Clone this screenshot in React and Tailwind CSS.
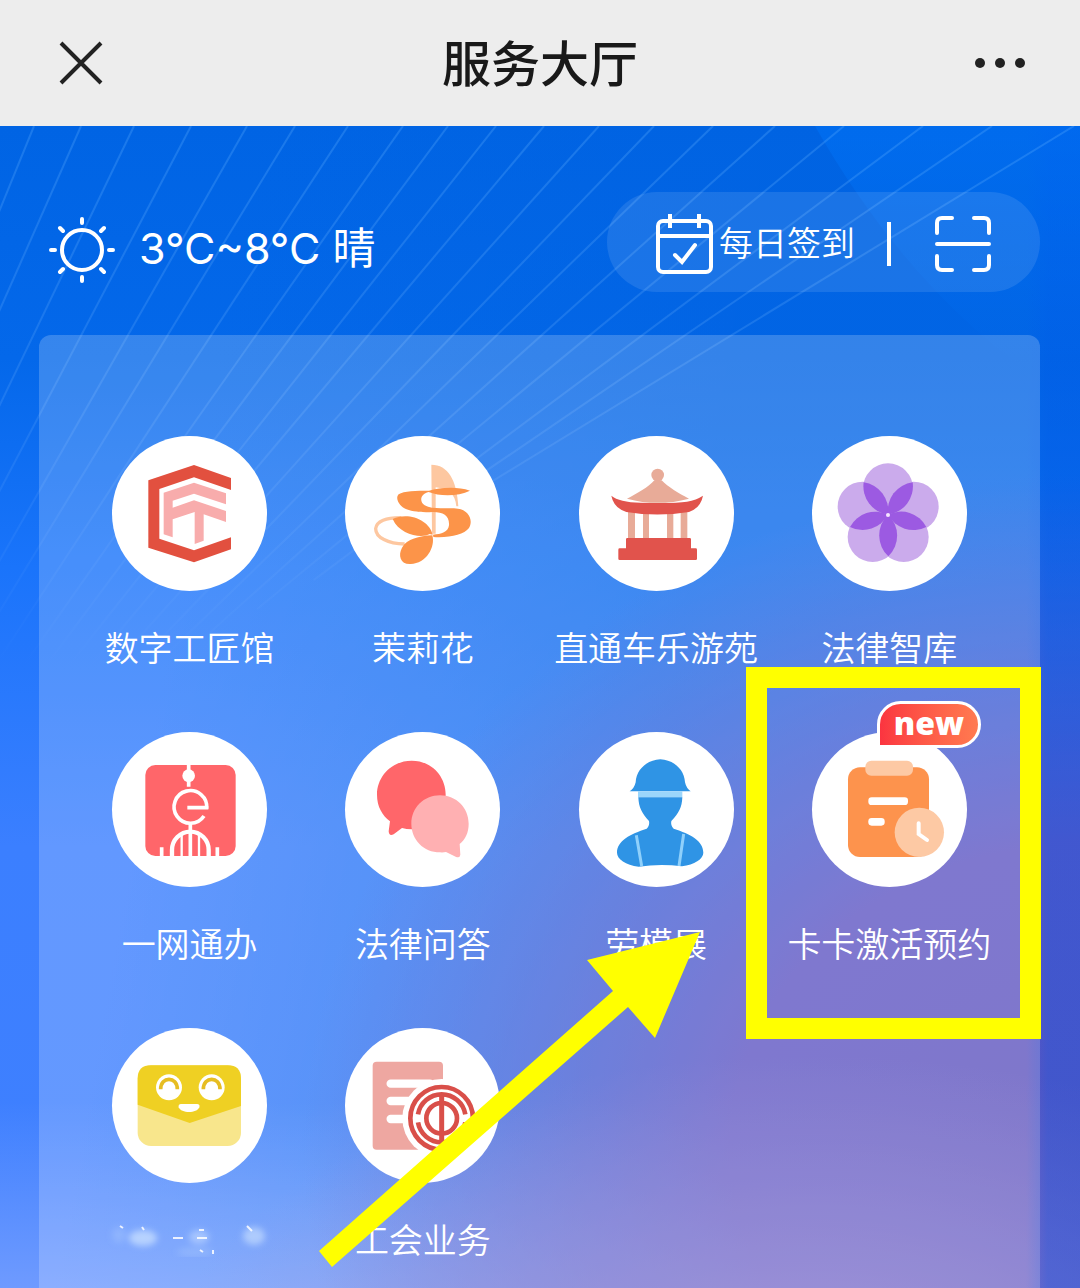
const RAYS = [
  34, 81, 134, 191, 247, 295, 348, 403, 448, 496, 544, 599, 654, 713, 775, 844,
  923, 992, 1074,
];

const Rays = () => (
  <svg
    aria-hidden="true"
    className="absolute inset-x-0 top-0 w-full"
    viewBox="0 0 1080 560"
    fill="none"
  >
    <defs>
      <linearGradient id="ray" gradientUnits="userSpaceOnUse" x1="0" y1="0" x2="0" y2="540">
        <stop offset="0" stopColor="#5fb0ff" stopOpacity=".28" />
        <stop offset=".5" stopColor="#7fbcff" stopOpacity=".18" />
        <stop offset="1" stopColor="#9cc8ff" stopOpacity="0" />
      </linearGradient>
      <linearGradient id="facet" gradientUnits="userSpaceOnUse" x1="0" y1="0" x2="0" y2="240">
        <stop offset="0" stopColor="#0078ff" stopOpacity=".4" />
        <stop offset="1" stopColor="#0078ff" stopOpacity="0" />
      </linearGradient>
    </defs>
    <path d="M815 0H1080V240H1020Q900 150 815 0Z" fill="url(#facet)" />
    {RAYS.map((x) => {
      const angle = ((69 - x * 0.035) * Math.PI) / 180;
      return (
        <line
          key={x}
          x1={x}
          y1="0"
          x2={x - 760 * Math.cos(angle)}
          y2={760 * Math.sin(angle)}
          stroke="url(#ray)"
          strokeWidth="2"
        />
      );
    })}
  </svg>
);

const SunIcon = () => (
  <svg className="size-[66px]" viewBox="0 0 66 66" fill="none" stroke="white" strokeWidth="4" strokeLinecap="round" aria-hidden="true">
    <circle cx="33" cy="33" r="20" />
    <path d="M33 2v4M33 60v4M2 33h4M60 33h4M11 11l3 3M52 52l3 3M11 55l3-3M52 14l3-3" />
  </svg>
);

const CalendarIcon = () => (
  <svg className="h-[62px] w-[58px]" viewBox="0 0 58 62" fill="none" stroke="white" strokeWidth="4" aria-hidden="true">
    <rect x="3" y="8" width="53" height="51" rx="5" />
    <path d="M3 23h53M15 1v14M44 1v14" />
    <path d="M20 42l7 7 13-17" strokeWidth="4" strokeLinecap="round" />
  </svg>
);

const ScanIcon = () => (
  <svg className="size-[58px]" viewBox="0 0 58 58" fill="none" stroke="white" strokeWidth="4" strokeLinecap="round" aria-hidden="true">
    <path d="M3 18V8q0-5 5-5h10M40 3h10q5 0 5 5v10M3 41v9q0 5 5 5h10M40 55h10q5 0 5-5V41M3 29h52" />
  </svg>
);

const CraftIcon = () => (
  <svg viewBox="36 32 465 465">
    <path fill="#e2503f" d="M145 165L282 119L393 158V194L282 156L178 191V340L282 375L393 336V372L282 411L145 367Z" />
    <path fill="#f8acac" d="M191 202L282 172L378 204V237L282 205L218 226V247L282 225L378 257V290L311 267V346L284 356V260L218 282V336L191 327Z" />
  </svg>
);

const JasmineIcon = () => (
  <svg viewBox="36 32 465 465">
    <path fill="#fdc7a0" d="M295 118C345 118 372 165 376 243H370C367 205 345 190 308 186V325H297Z" />
    <path fill="#fc9449" d="M411 196C370 182 318 188 288 196C250 196 212 196 197 207C187 217 195 236 214 249C235 259 262 262 300 260C332 260 350 272 348 300C346 320 325 327 300 328L301 335C350 338 393 328 408 308C422 283 406 254 375 250C345 245 300 255 275 240C258 228 262 206 287 200C318 213 375 214 411 196Z" />
    <path d="M205 277C160 276 130 288 128 310C128 336 165 356 215 356" fill="none" stroke="#fdc7a0" strokeWidth="10" />
    <path fill="#fc9449" d="M179 281C225 258 290 284 299 328L290 326C268 340 200 330 179 281Z" />
    <path fill="#fc9449" d="M298 330C308 365 280 415 233 416C203 418 194 391 207 367C222 341 258 332 298 330Z" />
  </svg>
);

const PavilionIcon = () => (
  <svg viewBox="36 32 465 465">
    <g fill="#e8ab98">
      <circle cx="272" cy="149" r="19" />
      <path d="M262 165H284C303 185 335 204 366 220Q272 245 180 220C210 205 245 185 262 165Z" />
      <path d="M183 258h21v84h-21zM228 262h18v80h-18zM300 262h19v80h-19zM341 258h20v84h-20z" />
    </g>
    <path fill="#e1534c" d="M133 211Q157 231 220 232Q320 235 360 229Q388 224 408 211Q401 248 366 260Q270 275 178 260Q140 248 133 211Z" />
    <path fill="#e1534c" d="M177 342q0-4 4-4H368q4 0 4 4V369H386q4 0 4 4V400q0 4-4 4H158q-4 0-4-4V373q0-4 4-4H177Z" />
  </svg>
);

const PetalsIcon = () => (
  <svg viewBox="36 32 465 465">
    <g fill="#cbabec">
      <circle cx="264" cy="189" r="75" />
      <circle cx="341" cy="244" r="75" />
      <circle cx="311" cy="335" r="75" />
      <circle cx="218" cy="335" r="75" />
      <circle cx="188" cy="244" r="75" />
    </g>
    <g fill="#9c5ae2">
      <path d="M264 268A86 86 0 0 1 191 171A86 86 0 0 1 264 268Z" />
      <path d="M264 268A86 86 0 0 1 338 171A86 86 0 0 1 264 268Z" />
      <path d="M264 268A86 86 0 0 1 150 305A86 86 0 0 1 264 268Z" />
      <path d="M264 268A86 86 0 0 1 379 305A86 86 0 0 1 264 268Z" />
      <path d="M264 268A86 86 0 0 1 265 393A86 86 0 0 1 264 268Z" />
    </g>
    <circle cx="264" cy="269" r="6" fill="#f6e6ff" />
  </svg>
);

const OneStopIcon = () => (
  <svg viewBox="36 36 465 465">
    <rect x="136" y="135" width="271" height="273" rx="30" fill="#ff666a" />
    <circle cx="266" cy="167" r="19" fill="white" />
    <g fill="none" stroke="white" strokeWidth="11">
      <path d="M266 134V200M262 263H325" />
      <path d="M320 266A49 49 0 1 0 312 288" />
      <path d="M216 410V390A55 55 0 0 1 326 390V410" strokeWidth="13" />
      <path d="M271 312V410M185 382V410M352 382V410" />
      <path d="M245 342V410M297 342V410" strokeWidth="7" />
    </g>
  </svg>
);

const ChatIcon = () => (
  <svg viewBox="36 36 465 465">
    <path fill="#ff666a" d="M236 122C295 122 338 168 338 224C338 285 295 328 236 328Q220 328 207 324L182 343Q168 350 167 334L171 304C148 286 132 260 132 224C132 168 178 122 236 122Z" />
    <path fill="#ffb0b2" d="M321 226C370 226 407 264 407 311C407 338 397 358 380 372L382 404Q380 416 368 410L339 396Q330 398 321 397C272 397 235 359 235 311C235 264 272 226 321 226Z" />
  </svg>
);

const WorkerIcon = () => (
  <svg viewBox="36 36 465 465">
    <path fill="#2f94e5" d="M188 214Q202 205 206 187C208 148 240 120 280 118C320 120 352 148 354 187Q358 205 371 214Z" />
    <path fill="#9cd6fb" d="M213 214H346V232H213Z" />
    <path fill="#2f94e5" d="M214 232H346C345 262 335 281 313 303Q310 316 320 326C370 342 409 362 409 398C409 417 382 434 345 439Q280 430 215 440C176 435 150 417 150 398C150 362 190 342 239 326Q249 316 246 303C225 281 215 262 214 232Z" />
    <path stroke="#8fd0fb" strokeWidth="9" d="M208 346L224 438M350 342L336 438" />
  </svg>
);

const BookingIcon = () => (
  <svg viewBox="217 216 465 465">
    <rect x="325" y="322" width="243" height="269" rx="36" fill="#fd934d" />
    <rect x="377" y="302" width="143" height="45" rx="18" fill="#fdc9a4" />
    <rect x="386" y="412" width="119" height="23" rx="10" fill="white" />
    <rect x="386" y="474" width="49" height="23" rx="10" fill="white" />
    <circle cx="539" cy="517" r="74" fill="#fdc9a4" />
    <path d="M537 490V522L562 540" fill="none" stroke="white" strokeWidth="12" strokeLinecap="round" />
  </svg>
);

const MailIcon = () => (
  <svg viewBox="67 54 465 465">
    <rect x="144" y="166" width="310" height="242" rx="40" fill="#f8e68c" />
    <path fill="#efd023" d="M144 284V206Q144 166 184 166H414Q454 166 454 206V288L300 339Z" />
    <circle cx="238" cy="232" r="39" fill="white" />
    <circle cx="366" cy="232" r="39" fill="white" />
    <g fill="none" stroke="#e6bd22" strokeWidth="11">
      <path d="M213 238C213 198 263 198 263 238M341 238C341 198 391 198 391 238" />
    </g>
    <path fill="white" d="M274 282H322Q332 283 329 292C322 311 274 311 267 292Q265 283 274 282Z" />
  </svg>
);

const UnionIcon = () => (
  <svg viewBox="107 323 465 465">
    <rect x="190" y="424" width="211" height="264" rx="12" fill="#eea7a1" />
    <path stroke="white" strokeWidth="25" strokeLinecap="round" d="M244 490H362M244 542H310M244 596H290" />
    <circle cx="397" cy="594" r="118" fill="white" />
    <g fill="none" stroke="#d94f49" strokeWidth="14">
      <circle cx="397" cy="594" r="94" />
      <path d="M326 582A72 72 0 0 1 468 582M326 606A72 72 0 0 0 468 606" />
      <circle cx="397" cy="594" r="46" />
      <path d="M397 524V664" strokeWidth="15" />
    </g>
  </svg>
);

// label is worn away on this entry, only a few strokes stay visible
const WornLabel = () => (
  <svg className="h-9 w-[170px]" viewBox="0 0 170 36" aria-hidden="true">
    <defs>
      <filter id="soft" x="-40%" y="-40%" width="180%" height="180%">
        <feGaussianBlur stdDeviation="3" />
      </filter>
    </defs>
    <g fill="#cfe4ff" filter="url(#soft)">
      <ellipse cx="38" cy="17" rx="14" ry="8" opacity=".7" />
      <ellipse cx="94" cy="16" rx="10" ry="7" opacity=".5" />
      <ellipse cx="149" cy="15" rx="11" ry="9" opacity=".6" />
      <ellipse cx="14" cy="14" rx="7" ry="8" opacity=".2" />
      <ellipse cx="90" cy="31" rx="18" ry="5" opacity=".2" />
    </g>
    <path d="M68 17h10M92 17h10M142 5l5 5M15 5l3 2M37 6l2 3M94 9h5M95 29l3 2M108 29v4" stroke="white" strokeWidth="2" opacity=".85" />
  </svg>
);

const Arrow = () => (
  <svg
    className="pointer-events-none absolute -top-[97px] left-[13px] z-10 h-[337px] w-[384px]"
    viewBox="0 0 384 337"
    aria-hidden="true"
  >
    <path fill="#ffff00" d="M0 320L294 60L268 29L381 1L336 107L309 76L13 336Z" />
  </svg>
);

const SERVICES = [
  { label: "数字工匠馆", icon: CraftIcon },
  { label: "茉莉花", icon: JasmineIcon },
  { label: "直通车乐游苑", icon: PavilionIcon },
  { label: "法律智库", icon: PetalsIcon },
  { label: "一网通办", icon: OneStopIcon },
  { label: "法律问答", icon: ChatIcon },
  { label: "劳模展", icon: WorkerIcon },
  { label: "卡卡激活预约", icon: BookingIcon, isNew: true, framed: true },
  { icon: MailIcon },
  { label: "工会业务", icon: UnionIcon, arrow: true },
];

const ServiceItem = ({ label, icon: Icon, isNew, framed, arrow }) => (
  <li className="relative flex justify-center">
    <button
      type="button"
      aria-label={label || "信箱"}
      className="flex flex-col items-center gap-[38px]"
    >
      <span className="relative size-[155px] rounded-full bg-white">
        <Icon />
        {isNew && (
          <span className="absolute -top-[31px] left-[65px] flex h-[47px] w-[104px] items-center justify-center rounded-t-3xl rounded-br-3xl border-3 border-white bg-linear-to-r from-[#fb3440] to-[#ff7a50] pb-1 font-['Open_Sans',sans-serif] text-[32px] leading-9 font-extrabold">
            new
          </span>
        )}
      </span>
      {label ? (
        <span className="text-[34px] leading-9 font-[350] whitespace-nowrap">{label}</span>
      ) : (
        <WornLabel />
      )}
    </button>
    {framed && (
      <div className="pointer-events-none absolute -top-[65px] -right-[35px] -bottom-[78px] -left-[27px] border-[21px] border-[#ffff00]" />
    )}
    {arrow && <Arrow />}
  </li>
);

const App = () => (
  <div className="flex min-h-screen flex-col overflow-hidden font-['Noto_Sans_CJK_SC',sans-serif]">
    {/* Title bar */}
    <header className="grid h-[126px] grid-cols-3 items-center bg-[#ededed] px-[54px] text-[#191919]">
      <button type="button" aria-label="关闭" className="justify-self-start">
        <svg className="size-[54px]" viewBox="0 0 54 54" stroke="#222" strokeWidth="4" aria-hidden="true">
          <path d="M7 7L47 47M47 7L7 47" />
        </svg>
      </button>
      <h1 className="pb-1 text-center text-[49px] leading-[64px] font-medium">服务大厅</h1>
      <button type="button" aria-label="更多" className="justify-self-end">
        <svg className="h-3 w-[52px]" viewBox="0 0 52 12" fill="#222" aria-hidden="true">
          <circle cx="6" cy="6" r="5" />
          <circle cx="26" cy="6" r="5" />
          <circle cx="46" cy="6" r="5" />
        </svg>
      </button>
    </header>

    <main className="relative flex flex-1 flex-col bg-[linear-gradient(90deg,#0060ff00_95%,#0058e850_97%),radial-gradient(ellipse_60%_28%_at_75%_108%,#8a7dd0_0%,#8a7dd000_100%),radial-gradient(ellipse_72%_58%_at_100%_88%,#6055bd_0%,#5f57c4_45%,#5f57c400_100%),linear-gradient(180deg,#8aaaff00_84%,#8aaaffa0_100%),linear-gradient(100deg,#2b7bff00_0%,#0062e000_20%,#0062e080_60%),linear-gradient(180deg,#0064e4_0%,#0468ea_20%,#1a74fb_38%,#3b7fff_62%,#4080ff_100%)] text-white">
      <Rays />

      {/* Weather and sign-in */}
      <div className="relative flex items-center justify-between pt-[66px] pr-10 pb-[43px] pl-[49px]">
        <div className="flex items-center gap-6 pt-4">
          <SunIcon />
          <p className="pb-1 font-['Inter','Noto_Sans_CJK_SC',sans-serif] text-[43px] leading-[60px]">
            3°C~8°C 晴
          </p>
        </div>
        <div className="flex h-[100px] items-center rounded-full bg-white/10 px-12 pt-1">
          <button type="button" className="flex items-center gap-1.5">
            <CalendarIcon />
            <span className="pb-1 text-[34px] leading-9 font-[350]">每日签到</span>
          </button>
          <span className="mr-[43px] ml-8 h-11 w-1 bg-white" />
          <button type="button" aria-label="扫一扫">
            <ScanIcon />
          </button>
        </div>
      </div>

      {/* Service grid */}
      <section className="relative mr-10 ml-[39px] flex-1 rounded-t-xl bg-white/20 px-[34px] pt-[101px] pb-7">
        <ul className="grid grid-cols-4 gap-y-[67px]">
          {SERVICES.map((s, i) => (
            <ServiceItem key={i} {...s} />
          ))}
        </ul>
      </section>
    </main>
  </div>
);

export default App;
